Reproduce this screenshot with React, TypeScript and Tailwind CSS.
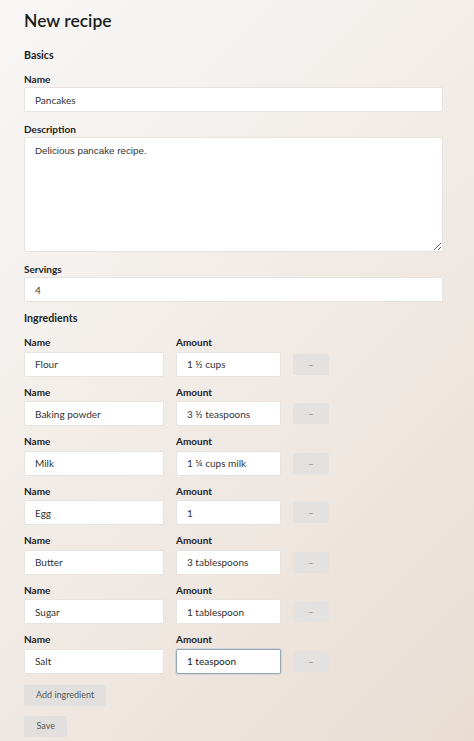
import React from "react";

const ingredients = [
  { name: "Flour", amount: "1 ½ cups" },
  { name: "Baking powder", amount: "3 ½ teaspoons" },
  { name: "Milk", amount: "1 ¼ cups milk" },
  { name: "Egg", amount: "1" },
  { name: "Butter", amount: "3 tablespoons" },
  { name: "Sugar", amount: "1 tablespoon" },
  { name: "Salt", amount: "1 teaspoon" },
];

function Label({ children }: { children: React.ReactNode }) {
  return <div className="text-[10px] leading-[12px] font-bold text-[#222]">{children}</div>;
}

export default function App() {
  return (
    <div className="min-h-screen bg-[linear-gradient(135deg,#f8f7f6_0%,#f1ebe6_50%,#e9ddd3_100%)] font-['Lato',sans-serif] pl-6 pr-[31px] pt-[10px] pb-[5px] text-[#222]">
      <h1 className="text-[17.5px] leading-[22px] font-semibold text-[#1c1c1c]">New recipe</h1>
      <h2 className="mt-[16px] text-[10.7px] leading-[14px] font-bold">Basics</h2>

      <div className="mt-[11px]">
        <Label>Name</Label>
        <input
          defaultValue="Pancakes"
          className="mt-[2px] block w-full h-[25px] bg-white border border-[#e6e3e0] rounded-[2px] pl-[10px] text-[10px] text-[#333] outline-none"
        />
      </div>

      <div className="mt-[11px]">
        <Label>Description</Label>
        <textarea
          defaultValue="Delicious pancake recipe."
          className="mt-[2px] block w-full h-[115px] bg-white border border-[#e6e3e0] rounded-[2px] px-[10px] pt-[7px] text-[9.8px] leading-[12px] font-['Liberation_Sans',Arial,sans-serif] text-[#333] outline-none"
        />
      </div>

      <div className="mt-[11px]">
        <Label>Servings</Label>
        <input
          defaultValue="4"
          className="mt-[2px] block w-full h-[25px] bg-white border border-[#e6e3e0] rounded-[2px] pl-[10px] text-[10px] text-[#333] outline-none"
        />
      </div>

      <h2 className="mt-[9px] text-[10.7px] leading-[14px] font-bold">Ingredients</h2>

      <div className="mt-[11px] flex flex-col gap-[9px]">
        {ingredients.map((ing, i) => {
          const last = i === ingredients.length - 1;
          return (
            <div key={i} className="flex items-end gap-3">
              <div className="w-[140px]">
                <Label>Name</Label>
                <input
                  defaultValue={ing.name}
                  className="mt-[3.5px] block w-full h-[25px] bg-white border border-[#e6e3e0] rounded-[2px] pl-[10px] text-[10px] text-[#333] outline-none"
                />
              </div>
              <div className="w-[105px]">
                <Label>Amount</Label>
                <input
                  defaultValue={ing.amount}
                  className={
                    last
                      ? "mt-[3.5px] block w-full h-[25px] bg-white border border-[#93a9bb] shadow-[0_0_0_1px_rgba(147,169,187,0.25)] rounded-[2px] pl-[10px] text-[10px] text-[#222] outline-none"
                      : "mt-[3.5px] block w-full h-[25px] bg-white border border-[#e6e3e0] rounded-[2px] pl-[10px] text-[10px] text-[#333] outline-none"
                  }
                />
              </div>
              <button className="mb-[2px] w-[36px] h-[21px] bg-[#e3e2e1] rounded-[2px] text-[10px] text-[#8a8a8a] flex items-center justify-center">
                –
              </button>
            </div>
          );
        })}
      </div>

      <button className="mt-[11px] block h-[21px] px-[12px] bg-[#e1e0df] rounded-[2px] text-[9px] text-[#555]">
        Add ingredient
      </button>
      <button className="mt-[10px] block h-[21px] px-[12.5px] bg-[#e1e0df] rounded-[2px] text-[9px] text-[#555]">
        Save
      </button>
    </div>
  );
}
